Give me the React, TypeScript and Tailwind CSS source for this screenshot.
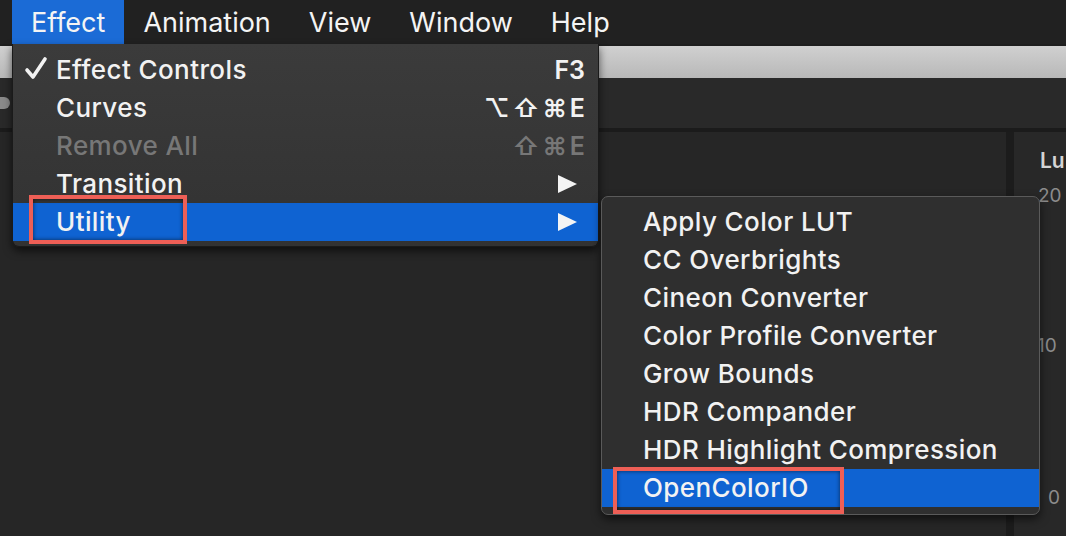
import React from 'react'

const font = {fontFamily: 'Inter, "DejaVu Sans", sans-serif'}

type Item = {
  label: string
  shortcut?: string
  checked?: boolean
  disabled?: boolean
  submenu?: boolean
  active?: boolean
}

const effectItems: Item[] = [
  {label: 'Effect Controls', shortcut: 'F3', checked: true},
  {label: 'Curves', shortcut: '⌥⇧⌘E'},
  {label: 'Remove All', shortcut: '⇧⌘E', disabled: true},
  {label: 'Transition', submenu: true},
  {label: 'Utility', submenu: true, active: true},
]

const utilityItems: Item[] = [
  {label: 'Apply Color LUT'},
  {label: 'CC Overbrights'},
  {label: 'Cineon Converter'},
  {label: 'Color Profile Converter'},
  {label: 'Grow Bounds'},
  {label: 'HDR Compander'},
  {label: 'HDR Highlight Compression'},
  {label: 'OpenColorIO', active: true},
]

function Check() {
  return (
    <svg width="24" height="24" viewBox="0 0 24 24" className="shrink-0">
      <path d="M3 14 L9 21 L21 3" fill="none" stroke="#f2f2f2" strokeWidth="3.6" strokeLinecap="round" strokeLinejoin="round" />
    </svg>
  )
}

function Arrow() {
  return (
    <svg width="19" height="18" viewBox="0 0 19 18">
      <path d="M0 0 L19 9 L0 18 Z" fill="#f4f4f4" />
    </svg>
  )
}

function MenuRow({item}: {item: Item}) {
  return (
    <div
      className={`flex h-[38px] items-center pr-[11px] ${item.active ? 'bg-[#0f63d2]' : ''} ${
        item.disabled ? 'text-[#777777]' : 'text-[#f2f2f2]'
      }`}
    >
      <div className="flex w-[43px] pl-[11px]">
        {item.checked && (
          <div className="mt-[-4px]">
            <Check />
          </div>
        )}
      </div>
      <span className="text-[26px] font-medium leading-none tracking-[0.4px]">{item.label}</span>
      <div className="ml-auto flex items-center text-[25px] font-semibold leading-none">
        {item.shortcut && (
          <span className={item.shortcut === 'F3' ? 'mr-[2px]' : 'mr-[-1px] tracking-[3px]'}>{item.shortcut}</span>
        )}
        {item.submenu && (
          <div className="mr-[10px]">
            <Arrow />
          </div>
        )}
      </div>
    </div>
  )
}

function SubRow({item}: {item: Item}) {
  return (
    <div className={`flex h-[38px] items-center pl-[41px] ${item.active ? 'bg-[#0f63d2]' : ''} text-[#f2f2f2]`}>
      <span className="text-[26px] font-medium leading-none tracking-[0.4px]">{item.label}</span>
    </div>
  )
}

export default function App() {
  const menus = ['Effect', 'Animation', 'View', 'Window', 'Help']

  return (
    <div className="relative flex h-[536px] w-[1066px] flex-col overflow-hidden bg-[#262626]" style={font}>
      {/* menu bar */}
      <div className="flex h-[44px] shrink-0 items-stretch bg-[#212121] pl-[12px]">
        {menus.map((m, i) => (
          <div
            key={m}
            className={`flex items-center px-[19px] text-[27px] leading-none text-[#f4f4f4] ${i === 0 ? 'bg-[#1b6bd6]' : ''}`}
          >
            {m}
          </div>
        ))}
      </div>

      {/* window title strip */}
      <div className="h-[2px] shrink-0 bg-[#1e1e1e]" />
      <div className="h-[32px] shrink-0 bg-gradient-to-b from-[#d0d0d0] to-[#b8b8b8]" />

      {/* toolbar */}
      <div className="flex h-[50px] shrink-0 items-center bg-[#292929]">
        <div className="ml-[-6px] h-[12px] w-[16px] rounded-full bg-[#8a8a8a]" />
      </div>
      <div className="h-[4px] shrink-0 bg-[#1b1b1b]" />

      {/* panels */}
      <div className="flex flex-1">
        <div className="flex-1 bg-[#262626]" />
        <div className="w-[8px] bg-[#1c1c1c]" />
        <div className="w-[52px] bg-[#282828] leading-none">
          <div className="pl-[26px] pt-[18px] text-[21px] font-semibold text-[#d4d4d4]">Lu</div>
          <div className="pl-[24px] pt-[15px] text-[19px] text-[#8c8c8c]">20</div>
          <div className="pl-[23px] pt-[131px] text-[19px] text-[#8c8c8c]">10</div>
          <div className="pl-[34px] pt-[133px] text-[19px] text-[#8c8c8c]">0</div>
        </div>
      </div>

      {/* Effect dropdown */}
      <div className="absolute left-[12px] top-[44px] w-[587px] rounded-b-[7px] border border-t-0 border-[#1a1a1a] bg-gradient-to-b from-[#3b3b3b] to-[#323232] pb-[5px] pt-[7px] shadow-[0_4px_8px_rgba(0,0,0,0.6)]">
        {effectItems.map((it) => (
          <MenuRow key={it.label} item={it} />
        ))}
        <div className="pointer-events-none absolute left-[16px] top-[151px] h-[49px] w-[158px] border-[4px] border-[#ee5f56] shadow-[inset_0_0_4px_rgba(0,0,0,0.6)]" />
      </div>

      {/* Utility submenu */}
      <div className="absolute left-[601px] top-[196px] w-[439px] rounded-[7px] border border-[#5a5a5a] bg-[#2f2f2f] pb-[7px] pt-[6px] shadow-[0_4px_10px_rgba(0,0,0,0.6)]">
        {utilityItems.map((it) => (
          <SubRow key={it.label} item={it} />
        ))}
        <div className="pointer-events-none absolute left-[11px] top-[270px] h-[47px] w-[231px] border-[4px] border-[#ee5f56] shadow-[inset_0_0_4px_rgba(0,0,0,0.6)]" />
      </div>
    </div>
  )
}
